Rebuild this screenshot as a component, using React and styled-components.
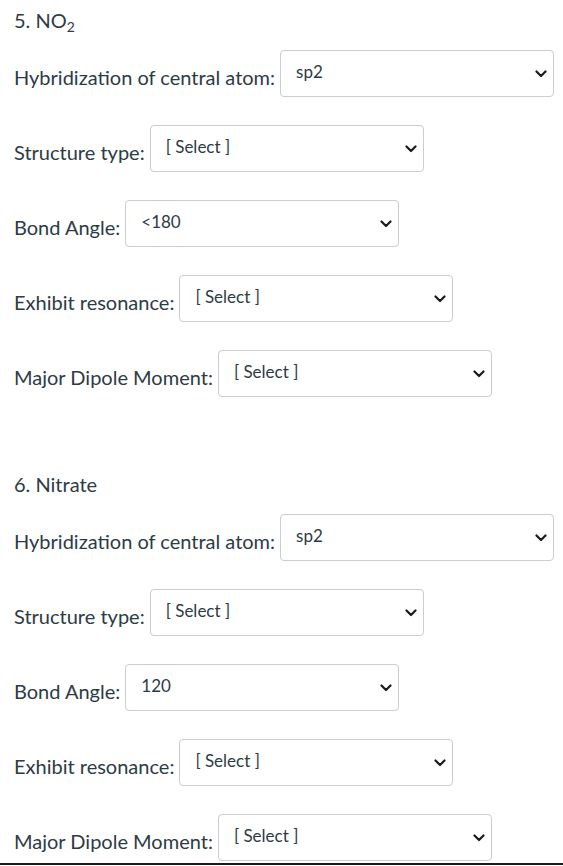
import React, { useState } from 'react';
import styled, { createGlobalStyle } from 'styled-components';

const questions = [
  {
    id: 5,
    title: 'NO',
    sub: '2',
    answers: ['sp2', '[ Select ]', '<180', '[ Select ]', '[ Select ]'],
  },
  {
    id: 6,
    title: 'Nitrate',
    answers: ['sp2', '[ Select ]', '120', '[ Select ]', '[ Select ]'],
  },
];

const fields = [
  'Hybridization of central atom:',
  'Structure type:',
  'Bond Angle:',
  'Exhibit resonance:',
  'Major Dipole Moment:',
];

function Dropdown({ value }) {
  const [val, setVal] = useState(value);
  return (
    <SelectWrap>
      <Select value={val} onChange={e => setVal(e.target.value)}>
        <option>{value}</option>
      </Select>
      <Chevron viewBox="0 0 12 8" aria-hidden="true">
        <path d="M1.5 1.5 L6 6 L10.5 1.5" fill="none" stroke="#1a1a1a" strokeWidth="2.2" strokeLinecap="round" strokeLinejoin="round" />
      </Chevron>
    </SelectWrap>
  );
}

export default function App() {
  return (
    <Page>
      <GlobalStyle />
      {questions.map(q => (
        <Section key={q.id}>
          <Heading>
            {q.id}. {q.title}
            {q.sub && <Sub>{q.sub}</Sub>}
          </Heading>
          {fields.map((f, i) => (
            <Row key={f}>
              <Label>{f}</Label>
              <Dropdown value={q.answers[i]} />
            </Row>
          ))}
        </Section>
      ))}
      <BottomRule />
    </Page>
  );
}

const GlobalStyle = createGlobalStyle`
  body {
    margin: 0;
    background: #fff;
    font-family: Lato, "Liberation Sans", sans-serif;
    color: #2d3b45;
  }
`;

const Page = styled.div`
  width: 563px;
  height: 866px;
  overflow: hidden;
  padding: 8px 0 0 14px;
  box-sizing: border-box;
  display: flex;
  flex-direction: column;
  gap: 75px;
`;

const Section = styled.div`
  display: flex;
  flex-direction: column;
  gap: 28px;
`;

const Heading = styled.div`
  font-size: 20px;
  line-height: 24px;
  margin-bottom: -10px;
`;

const Sub = styled.sub`
  font-size: 14px;
  vertical-align: -4px;
  line-height: 0;
`;

const Row = styled.div`
  display: flex;
  align-items: flex-start;
  gap: 5px;
`;

const Label = styled.span`
  font-size: 20px;
  line-height: 24px;
  margin-top: 15px;
  white-space: nowrap;
`;

const SelectWrap = styled.div`
  position: relative;
  width: 274px;
  height: 47px;
  flex: none;
`;

const Select = styled.select`
  appearance: none;
  width: 100%;
  height: 100%;
  box-sizing: border-box;
  border: 1px solid #c7cdd1;
  border-radius: 4px;
  background: #fff;
  padding: 0 30px 4px 15px;
  font-family: Lato, "Liberation Sans", sans-serif;
  font-size: 17px;
  color: #2d3b45;
  outline: none;
`;

const Chevron = styled.svg`
  position: absolute;
  right: 7px;
  top: 20px;
  width: 12px;
  height: 8px;
  pointer-events: none;
`;

const BottomRule = styled.div`
  height: 2px;
  background: #1a1a1a;
  margin: -73px 0 0 -14px;
`;
